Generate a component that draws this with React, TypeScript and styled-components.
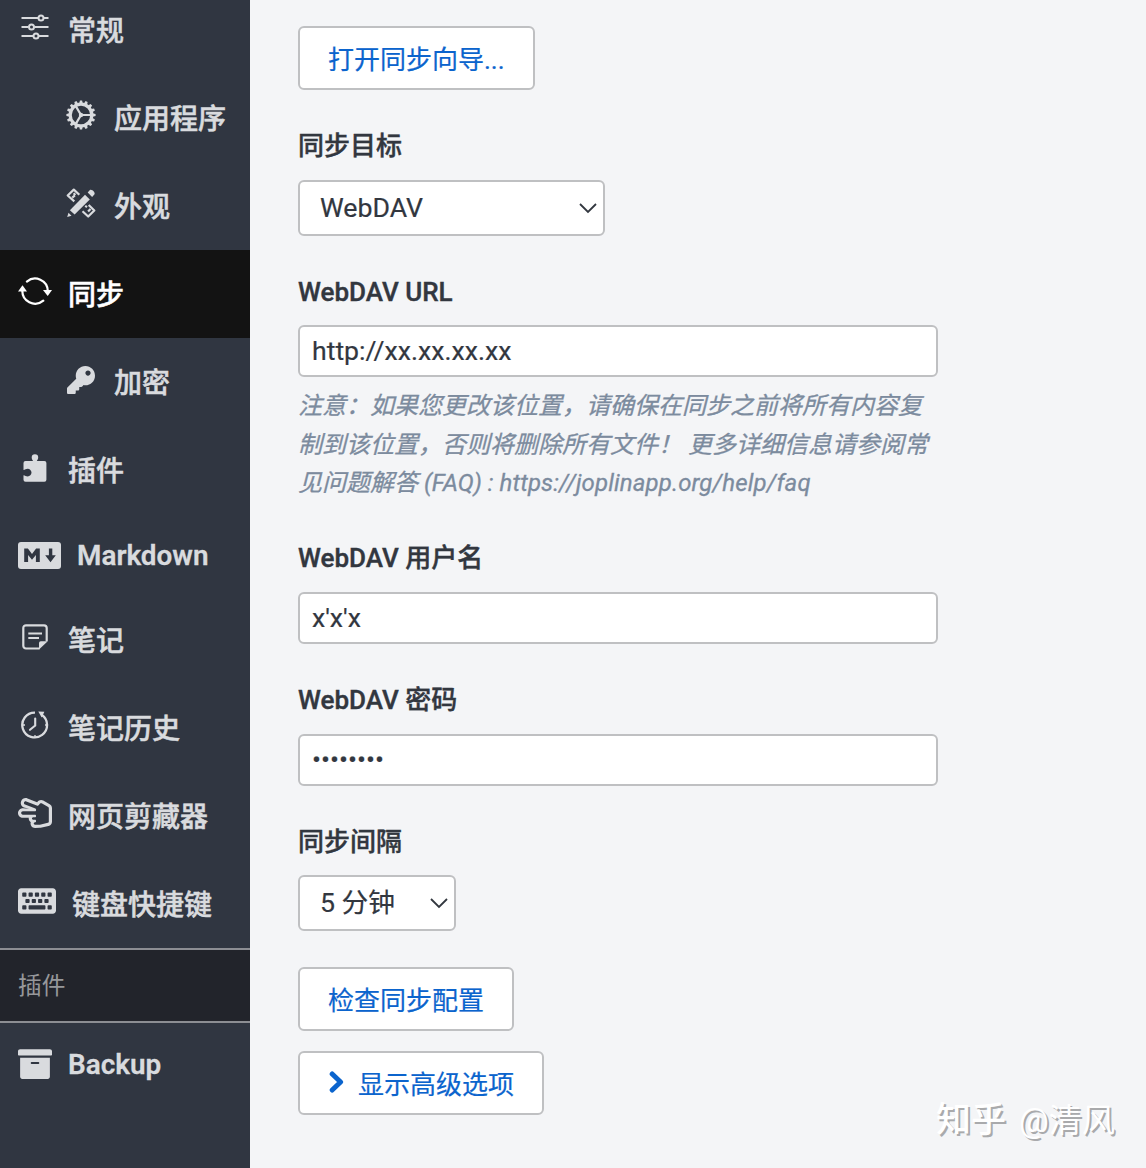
import React from 'react';
import styled, { createGlobalStyle } from 'styled-components';
import { FaArchive, FaKey, FaKeyboard, FaRegHandScissors } from 'react-icons/fa';

const fontStack = `Roboto, "Noto Sans CJK SC", sans-serif`;

const GlobalStyle = createGlobalStyle`
  * { box-sizing: border-box; }
  body { margin: 0; overflow: hidden; font-family: ${fontStack}; background: #f4f5f7; }
`;

const Page = styled.div`
  position: relative;
  display: flex;
  width: 1146px;
  height: 1168px;
  overflow: hidden;
`;

const Sidebar = styled.nav`
  display: flex;
  flex-direction: column;
  width: 250px;
  flex: none;
  margin-top: -14px;
  background: #303641;
`;

const NavRow = styled.a<{ $sub?: boolean; $selected?: boolean; $latin?: boolean }>`
  display: flex;
  align-items: center;
  flex: none;
  height: ${(p) => (p.$latin ? 82 : 88)}px;
  padding-left: ${(p) => (p.$sub ? 64 : 18)}px;
  background: ${(p) => (p.$selected ? '#131313' : 'transparent')};
  color: ${(p) => (p.$selected ? '#ffffff' : '#d9dbde')};
`;

const NavIcon = styled.span<{ $width?: number; $lift?: number }>`
  display: flex;
  justify-content: center;
  flex: none;
  width: ${(p) => p.$width ?? 34}px;
  margin-right: 16px;
  padding-bottom: ${(p) => p.$lift ?? 5}px;
  svg { display: block; }
`;

const NavLabel = styled.span<{ $latin?: boolean }>`
  padding-top: ${(p) => (p.$latin ? 2 : 3)}px;
  font-size: ${(p) => (p.$latin ? 27.9 : 28)}px;
  font-weight: ${(p) => (p.$latin ? 600 : 500)};
  line-height: 40px;
  white-space: nowrap;
  -webkit-text-stroke: ${(p) => (p.$latin ? 0.3 : 0.5)}px currentColor;
`;

const NavDivider = styled.div`
  display: flex;
  align-items: center;
  flex: none;
  height: 75px;
  padding: 0 0 3px 18px;
  border-top: 2px solid #8c8e93;
  border-bottom: 2px solid #8c8e93;
  background: #22242b;
  color: #96979a;
  font-size: 23.7px;
`;

const Content = styled.main`
  display: flex;
  flex-direction: column;
  align-items: flex-start;
  flex: 1;
  padding: 26px 0 0 48px;
  background: #f4f5f7;
  color: #32373f;
`;

const Button = styled.button<{ $width: number }>`
  display: flex;
  align-items: center;
  gap: 12px;
  width: ${(p) => p.$width}px;
  height: 64px;
  padding: 0 0 2px 28px;
  border: 2px solid #bfc0c2;
  border-radius: 6px;
  background: #fff;
  color: #0b64cd;
  font: 400 26px ${fontStack};
  white-space: nowrap;
  -webkit-text-stroke: 0.2px currentColor;
  svg { display: block; }
`;

const Field = styled.section<{ $top: number }>`
  display: flex;
  flex-direction: column;
  align-items: flex-start;
  margin-top: ${(p) => p.$top}px;
`;

const Label = styled.label<{ $gap: number }>`
  margin-bottom: ${(p) => p.$gap}px;
  font-size: 26px;
  font-weight: 500;
  line-height: 36px;
  white-space: nowrap;
  -webkit-text-stroke: 0.4px currentColor;
`;

const Select = styled.div<{ $width: number }>`
  display: flex;
  align-items: center;
  justify-content: space-between;
  width: ${(p) => p.$width}px;
  height: 56px;
  padding: 0 6px 0 20px;
  border: 2px solid #bfc0c2;
  border-radius: 6px;
  background: #fff;
  font-size: 26.7px;
  white-space: nowrap;
  -webkit-text-stroke: 0.2px currentColor;
`;

const SelectValue = styled.span<{ $lift?: number }>`
  padding-bottom: ${(p) => p.$lift ?? 0}px;
`;

const TextInput = styled.input`
  width: 640px;
  height: 52px;
  padding: 0 12px;
  border: 2px solid #bfc0c2;
  border-radius: 6px;
  background: #fff;
  color: #32373f;
  font: 400 26.65px ${fontStack};
  outline: none;
  -webkit-text-stroke: 0.2px currentColor;
`;

const Note = styled.p`
  margin: 10px 0 0;
  color: #7c8b9e;
  font-size: 24px;
  font-style: italic;
  line-height: 38.5px;
  -webkit-text-stroke: 0.3px currentColor;
`;

const NoteLine = styled.span`
  display: block;
  white-space: nowrap;
`;

const NoteLink = styled.span`
  letter-spacing: 0.12px;
`;

const Actions = styled.div`
  display: flex;
  flex-direction: column;
  gap: 20px;
  margin-top: 36px;
`;

const Watermark = styled.div`
  position: absolute;
  left: 936px;
  top: 1098px;
  display: flex;
  align-items: center;
  gap: 13px;
  color: #fff;
  font-size: 33px;
  line-height: 46px;
  white-space: nowrap;
  text-shadow: 2px 2px 0 #a9aaac;
`;

const WatermarkBrand = styled.span`
  font-size: 35px;
  font-weight: 500;
`;

const SlidersIcon = () => (
  <svg width="28" height="26" viewBox="0 0 28 26" fill="none" stroke="currentColor" strokeWidth="2">
    <path d="M.5 4H17M23 4h4.500M.5 13H7.500M13.500 13h14M.5 22H12M18 22h9.500" />
    <circle cx="20" cy="4" r="2.500" />
    <circle cx="10.500" cy="13" r="2.500" />
    <circle cx="15" cy="22" r="2.500" />
  </svg>
);

const teeth = Array.from({ length: 16 }, (_, i) => i * 22.5);

const GearIcon = () => (
  <svg width="30" height="30" viewBox="0 0 30 30" fill="none" stroke="currentColor">
    <circle cx="15" cy="15" r="10.800" strokeWidth="3.200" />
    {teeth.map((angle) => (
      <path key={angle} d="M13.200 3.500L13.900 .4h2.200l.7 3.100z" fill="currentColor" stroke="none" transform={`rotate(${angle} 15 15)`} />
    ))}
    <path d="M15 15h11M15 15L9.500 5.600M15 15L9.500 24.400" strokeWidth="2.200" />
    <circle cx="15" cy="15" r="2.200" fill="currentColor" stroke="none" />
  </svg>
);

const DesignIcon = () => (
  <svg width="30" height="30" viewBox="0 0 30 30" fill="none" stroke="currentColor" strokeWidth="2.200" strokeLinejoin="round">
    <path d="M8.300 13.300L1.700 7.500L7.800 1.600L13.300 6.800M6.300 9.600l2.600-2.200M7.600 5.200l1.800 1.800" />
    <path d="M22.700 17L28.300 22.500L22.200 28.500L16.500 23.300M20.800 17.700l-1.400 1.600M24.500 21l-2.400 2.600" />
    <path d="M3.900 22.300L19 6.800L23.800 11.400L8.600 26.600z" fill="currentColor" stroke="none" />
    <path d="M21.700 4.600l2.200-2.500c1.700-1.500 6 2.700 4.400 4.500l-2.200 2.400z" fill="currentColor" stroke="none" />
    <path d="M2.500 24.800l3 2.900L1.200 29z" fill="currentColor" stroke="none" />
  </svg>
);

const SyncIcon = () => (
  <svg width="34" height="28" viewBox="0 0 34 28" fill="none" stroke="currentColor" strokeWidth="2.200">
    <path d="M8.900 4.600A12.700 12.700 0 0 1 29.800 14M25.300 23.600A12.700 12.700 0 0 1 4.400 13" strokeLinecap="round" />
    <path d="M25 12.900h9L29.700 19z" fill="currentColor" stroke="none" />
    <path d="M0 14.500h9L4.500 8.300z" fill="currentColor" stroke="none" />
  </svg>
);

const PuzzleIcon = () => (
  <svg width="24" height="28" viewBox="0 0 24 28" fill="currentColor">
    <path d="M2.500 7.100H10.100C9.500 5.800 8.700 5.100 8.700 3.400a3.200 3.200 0 0 1 6.500 0c0 1.700-.9 2.400-1.400 3.700h7.600a2 2 0 0 1 2 2v16.700a2 2 0 0 1-2 2H2.500a2 2 0 0 1-2-2v-4.500c1.500.2 2.500 1.100 4.200 1.100 2.100 0 3.800-1.700 3.800-3.800s-1.700-3.900-3.800-3.900C3 14.700 2 15.700.5 16V9.100a2 2 0 0 1 2-2z" />
  </svg>
);

const MarkdownIcon = () => (
  <svg width="43" height="27" viewBox="0 0 43 27">
    <rect width="43" height="27" rx="3" fill="currentColor" />
    <path d="M6.200 20V6.500h3.700l4.100 5.400 4.100-5.400h3.700V20h-3.900v-7L14 17.700 10.100 13v7zM30.900 6.500h3.400v6.800h3.500l-5.300 6.900-5.300-6.900h3.700z" fill="#303641" />
  </svg>
);

const NoteIcon = () => (
  <svg width="26" height="26" viewBox="0 0 26 26" fill="none" stroke="currentColor" strokeWidth="2.200">
    <path d="M17.500 24.500H4A2.700 2.700 0 0 1 1.300 21.800V4A2.700 2.700 0 0 1 4 1.300h18A2.700 2.700 0 0 1 24.700 4v13.300" />
    <path d="M17 25.500V19a1.800 1.800 0 0 1 1.800-1.800h6.900z" fill="currentColor" stroke="none" />
    <path d="M6.300 9.500H20M6.300 14H17" strokeWidth="2" />
  </svg>
);

const HistoryIcon = () => (
  <svg width="28" height="28" viewBox="0 0 28 28" fill="none" stroke="currentColor" strokeWidth="2.300">
    <path d="M20.600 3.700A12.400 12.400 0 1 1 14 1.600" />
    <path d="M14.200 7.500V14.600L9 18.800" strokeLinecap="round" strokeWidth="2.100" />
    <path d="M17.300.6l6.100.2-2.700 5.600z" fill="currentColor" stroke="none" />
    <path d="M14 24v3M24 14h3M1 14h3" strokeWidth="1.300" />
  </svg>
);

const SelectArrow = () => (
  <svg width="18" height="12" viewBox="0 0 18 12" fill="none" stroke="#32373f" strokeWidth="1.800">
    <path d="M1 2L9 10L17 2" />
  </svg>
);

const ChevronIcon = () => (
  <svg width="18" height="22" viewBox="0 0 18 22" fill="none" stroke="currentColor" strokeWidth="5">
    <path d="M4.200 3L12.600 11L4.200 19" strokeLinejoin="round" strokeLinecap="round" />
  </svg>
);

interface NavItem {
  label: string;
  icon: React.ReactNode;
  sub?: boolean;
  selected?: boolean;
  latin?: boolean;
  iconWidth?: number;
  lift?: number;
}

const navItems: NavItem[] = [
  { label: '常规', icon: <SlidersIcon />, lift: 6 },
  { label: '应用程序', icon: <GearIcon />, sub: true, lift: 6 },
  { label: '外观', icon: <DesignIcon />, sub: true, lift: 6 },
  { label: '同步', icon: <SyncIcon />, selected: true, lift: 6 },
  { label: '加密', icon: <FaKey size={28} />, sub: true },
  { label: '插件', icon: <PuzzleIcon />, lift: 5 },
  { label: 'Markdown', icon: <MarkdownIcon />, latin: true, iconWidth: 43, lift: 0 },
  { label: '笔记', icon: <NoteIcon />, lift: 6 },
  { label: '笔记历史', icon: <HistoryIcon />, lift: 6 },
  { label: '网页剪藏器', icon: <FaRegHandScissors size={34} />, lift: 6 },
  { label: '键盘快捷键', icon: <FaKeyboard size={38} />, iconWidth: 38, lift: 6 },
];

const NavEntry = ({ label, icon, sub, selected, latin, iconWidth, lift }: NavItem) => (
  <NavRow $sub={sub} $selected={selected} $latin={latin}>
    <NavIcon $width={iconWidth} $lift={lift}>{icon}</NavIcon>
    <NavLabel $latin={latin}>{label}</NavLabel>
  </NavRow>
);

export default function App() {
  return (
    <>
      <GlobalStyle />
      <Page>
        <Sidebar>
          {navItems.map((item) => (
            <NavEntry key={item.label} {...item} />
          ))}
          <NavDivider>插件</NavDivider>
          <NavEntry label="Backup" icon={<FaArchive size={34} />} latin lift={0} />
        </Sidebar>
        <Content>
          <Button $width={237}>打开同步向导...</Button>
          <Field $top={38}>
            <Label $gap={16}>同步目标</Label>
            <Select $width={307}>
              <SelectValue>WebDAV</SelectValue>
              <SelectArrow />
            </Select>
          </Field>
          <Field $top={38}>
            <Label $gap={15}>WebDAV URL</Label>
            <TextInput defaultValue="http://xx.xx.xx.xx" />
            <Note>
              <NoteLine>注意：如果您更改该位置，请确保在同步之前将所有内容复</NoteLine>
              <NoteLine>制到该位置，否则将删除所有文件！ 更多详细信息请参阅常</NoteLine>
              <NoteLine>
                见问题解答 (FAQ) : <NoteLink>https://joplinapp.org/help/faq</NoteLink>
              </NoteLine>
            </Note>
          </Field>
          <Field $top={37.5}>
            <Label $gap={16}>WebDAV 用户名</Label>
            <TextInput defaultValue="x'x'x" />
          </Field>
          <Field $top={38}>
            <Label $gap={16}>WebDAV 密码</Label>
            <TextInput type="password" defaultValue="password" />
          </Field>
          <Field $top={38}>
            <Label $gap={15}>同步间隔</Label>
            <Select $width={158}>
              <SelectValue $lift={5}>5 分钟</SelectValue>
              <SelectArrow />
            </Select>
          </Field>
          <Actions>
            <Button $width={216}>检查同步配置</Button>
            <Button $width={246}>
              <ChevronIcon />
              显示高级选项
            </Button>
          </Actions>
        </Content>
        <Watermark>
          <WatermarkBrand>知乎</WatermarkBrand>
          <span>@清风</span>
        </Watermark>
      </Page>
    </>
  );
}
